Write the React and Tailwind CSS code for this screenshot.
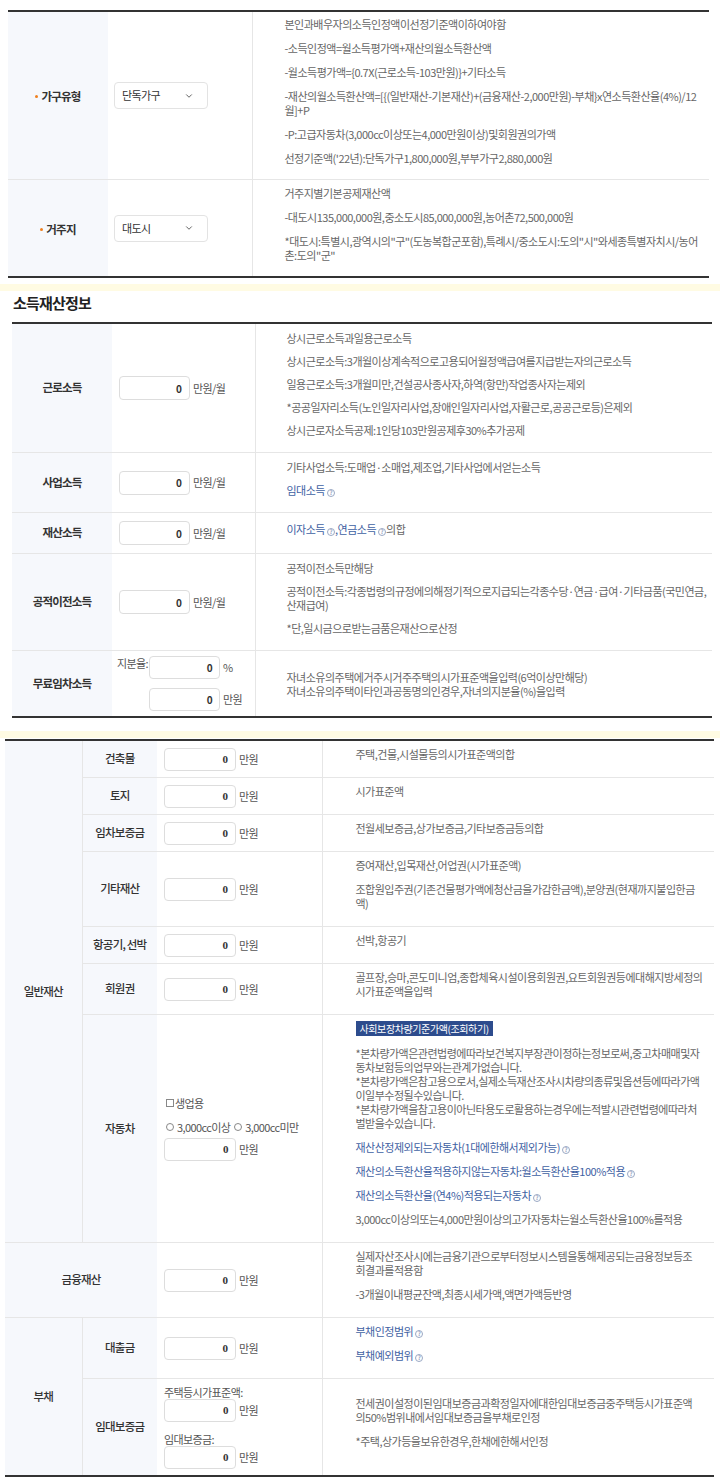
import React from "react";
import { ChevronDown } from "lucide-react";

const DESC = "text-[11px] tracking-[-0.5px] text-[#666] whitespace-nowrap";
const LINK = "text-[#3f62a3]";

function Q() {
  return (
    <span className="ml-[2px] inline-flex h-[8px] w-[8px] items-center justify-center rounded-full border border-[#9aa8c4] align-[0px] text-[6px] font-bold leading-none tracking-normal text-[#9aa8c4]">
      ?
    </span>
  );
}

function Select({ label }) {
  return (
    <div className="flex h-[27px] w-[94px] items-center justify-between rounded-[4px] border border-[#e3e3e3] bg-white pl-[7px] pr-[13px] text-[11px] tracking-[-0.6px] text-[#333]">
      <span>{label}</span>
      <ChevronDown size={10} strokeWidth={2.2} className="text-[#555]" />
    </div>
  );
}

function Num2({ small }) {
  return (
    <span
      className={
        small
          ? "inline-flex h-[23px] w-[71px] items-center justify-end rounded-[4px] border border-[#dddddd] bg-white pr-[7px] text-[10px] font-bold text-[#333]"
          : "inline-flex h-[24px] w-[71px] items-center justify-end rounded-[4px] border border-[#dddddd] bg-white pr-[7px] text-[10px] font-bold text-[#333]"
      }
    >
      0
    </span>
  );
}

function Num3() {
  return (
    <span className="inline-flex h-[23px] w-[72px] items-center justify-end rounded-[4px] border border-[#dddddd] bg-white pr-[7px] font-['Liberation_Serif',serif] text-[11px] font-bold text-[#333]">
      0
    </span>
  );
}

function Unit({ children }) {
  return <span className="ml-[3px] text-[11px] tracking-[-0.6px] text-[#555]">{children}</span>;
}

function In2({ unit, small }) {
  return (
    <div className="flex items-center">
      <Num2 small={small} />
      <Unit>{unit}</Unit>
    </div>
  );
}

function In3() {
  return (
    <div className="flex items-center">
      <Num3 />
      <Unit>만원</Unit>
    </div>
  );
}

const TH1 = "bg-[#f6f8fc] text-[11.5px] font-bold tracking-[-0.8px] text-[#333] border-b border-[#e6e6e6]";
const TH2 = "bg-[#f6f8fc] text-[11.5px] font-bold tracking-[-0.8px] text-[#333] border-b border-[#e6e6e6]";
const TH3 = "bg-[#f6f8fc] text-[11.5px] font-medium tracking-[-0.8px] text-[#333] border-b border-[#e6e6e6]";
const IN2 = "border-b border-r border-[#e6e6e6] pl-[7px] py-[8px]";
const IN3 = "border-b border-r border-[#e6e6e6] pl-[7px] py-[6px]";
const D1 = "border-b border-[#e6e6e6] pl-[32px] pr-[2px] pt-[5px] pb-[4px] align-top";
const D2 = "border-b border-[#e6e6e6] pl-[31px] pr-[2px] pt-[7px] pb-[6px]";
const D3 = "border-b border-[#e6e6e6] pl-[33px] pr-[2px] py-[6px]";
const P1 = "mb-[10px] leading-[14px]";
const P2 = "mb-[9px] leading-[14px]";
const P3 = "mb-[10px] leading-[14px]";

function Section1() {
  return (
    <table className="ml-[8px] w-[701px] table-fixed border-collapse border-y-2 border-[#333]">
      <colgroup>
        <col className="w-[100px]" />
        <col className="w-[144px]" />
        <col />
      </colgroup>
      <tbody>
        <tr>
          <th className={TH1}>
            <span className="inline-flex items-center gap-[3px]">
              <span className="h-[3px] w-[3px] rounded-full bg-[#f0801e]" />
              가구유형
            </span>
          </th>
          <td className="border-b border-r border-[#e6e6e6] pl-[6px]">
            <Select label="단독가구" />
          </td>
          <td className={D1}>
            <div className={DESC}>
              <p className={P1}>본인과배우자의소득인정액이선정기준액이하여야함</p>
              <p className={P1}>-소득인정액=월소득평가액+재산의월소득환산액</p>
              <p className={P1}>-월소득평가액={"{"}0.7X(근로소득-103만원){"}"}+기타소득</p>
              <p className={P1}>
                -재산의월소득환산액=[{"{"}(일반재산-기본재산)+(금융재산-2,000만원)-부채{"}"}x연소득환산율(4%)/12
                <br />
                월]+P
              </p>
              <p className={P1}>-P:고급자동차(3,000cc이상또는4,000만원이상)및회원권의가액</p>
              <p className={P1}>선정기준액('22년):단독가구1,800,000원,부부가구2,880,000원</p>
            </div>
          </td>
        </tr>
        <tr>
          <th className={TH1}>
            <span className="inline-flex items-center gap-[3px]">
              <span className="h-[3px] w-[3px] rounded-full bg-[#f0801e]" />
              거주지
            </span>
          </th>
          <td className="border-b border-r border-[#e6e6e6] pl-[6px]">
            <Select label="대도시" />
          </td>
          <td className={D1 + " pt-[6px]"}>
            <div className={DESC}>
              <p className={P1}>거주지별기본공제재산액</p>
              <p className={P1}>-대도시135,000,000원,중소도시85,000,000원,농어촌72,500,000원</p>
              <p className={P1}>
                *대도시:특별시,광역시의"구"(도농복합군포함),특례시/중소도시:도의"시"와세종특별자치시/농어
                <br />
                촌:도의"군"
              </p>
            </div>
          </td>
        </tr>
      </tbody>
    </table>
  );
}

function Section2() {
  return (
    <table className="ml-[12px] w-[700px] table-fixed border-collapse border-y-2 border-[#333]">
      <colgroup>
        <col className="w-[100px]" />
        <col className="w-[143px]" />
        <col />
      </colgroup>
      <tbody>
        <tr>
          <th className={TH2}>근로소득</th>
          <td className={IN2}>
            <In2 unit="만원/월" />
          </td>
          <td className={D2}>
            <div className={DESC}>
              <p className={P2}>상시근로소득과일용근로소득</p>
              <p className={P2}>상시근로소득:3개월이상계속적으로고용되어월정액급여를지급받는자의근로소득</p>
              <p className={P2}>일용근로소득:3개월미만,건설공사종사자,하역(항만)작업종사자는제외</p>
              <p className={P2}>*공공일자리소득(노인일자리사업,장애인일자리사업,자활근로,공공근로등)은제외</p>
              <p className={P2}>상시근로자소득공제:1인당103만원공제후30%추가공제</p>
            </div>
          </td>
        </tr>
        <tr>
          <th className={TH2}>사업소득</th>
          <td className={IN2}>
            <In2 unit="만원/월" />
          </td>
          <td className={D2}>
            <div className={DESC}>
              <p className={P2}>기타사업소득:도매업·소매업,제조업,기타사업에서얻는소득</p>
              <p className={P2}>
                <span className={LINK}>임대소득</span>
                <Q />
              </p>
            </div>
          </td>
        </tr>
        <tr>
          <th className={TH2}>재산소득</th>
          <td className={IN2}>
            <In2 unit="만원/월" />
          </td>
          <td className={D2}>
            <div className={DESC}>
              <p className={P2}>
                <span className={LINK}>이자소득</span>
                <Q />
                <span className={LINK}>,연금소득</span>
                <Q />
                의합
              </p>
            </div>
          </td>
        </tr>
        <tr>
          <th className={TH2}>공적이전소득</th>
          <td className={IN2}>
            <In2 unit="만원/월" />
          </td>
          <td className={D2}>
            <div className={DESC}>
              <p className={P2}>공적이전소득만해당</p>
              <p className={P2}>
                공적이전소득:각종법령의규정에의해정기적으로지급되는각종수당·연금·급여·기타금품(국민연금,
                <br />
                산재급여)
              </p>
              <p className={P2}>*단,일시금으로받는금품은재산으로산정</p>
            </div>
          </td>
        </tr>
        <tr>
          <th className={TH2}>무료임차소득</th>
          <td className="border-b border-r border-[#e6e6e6] pl-[5px] py-[5px]">
            <div className="flex flex-col gap-[9px] text-[11px] tracking-[-0.6px] text-[#555]">
              <div className="flex items-start">
                <span className="w-[32px] shrink-0 leading-[14px]">지분율:</span>
                <div className="flex items-center">
                  <Num2 small />
                  <Unit>%</Unit>
                </div>
              </div>
              <div className="flex items-start">
                <span className="w-[32px] shrink-0" />
                <In2 unit="만원" small />
              </div>
            </div>
          </td>
          <td className={D2}>
            <div className={DESC}>
              <p className="leading-[14px]">
                자녀소유의주택에거주시거주주택의시가표준액을입력(6억이상만해당)
                <br />
                자녀소유의주택이타인과공동명의인경우,자녀의지분율(%)을입력
              </p>
            </div>
          </td>
        </tr>
      </tbody>
    </table>
  );
}

function Row3({ label, children }) {
  return (
    <tr>
      <th className={TH3}>{label}</th>
      <td className={IN3}>
        <In3 />
      </td>
      <td className={D3}>
        <div className={DESC}>{children}</div>
      </td>
    </tr>
  );
}

function Radio() {
  return <span className="mr-[3px] inline-block h-[8px] w-[8px] rounded-full border border-[#888]" />;
}

function Section3() {
  return (
    <table className="ml-[5px] w-[709px] table-fixed border-collapse border-y-2 border-[#333]">
      <colgroup>
        <col className="w-[77px]" />
        <col className="w-[75px]" />
        <col className="w-[165px]" />
        <col />
      </colgroup>
      <tbody>
        <tr>
          <th rowSpan={7} className="border-b border-r border-[#e6e6e6] bg-[#f6f8fc] text-[11.5px] font-medium tracking-[-0.8px] text-[#333]">
            일반재산
          </th>
          <th className={TH3}>건축물</th>
          <td className={IN3}>
            <In3 />
          </td>
          <td className={D3}>
            <div className={DESC}>
              <p className={P3}>주택,건물,시설물등의시가표준액의합</p>
            </div>
          </td>
        </tr>
        <Row3 label="토지">
          <p className={P3}>시가표준액</p>
        </Row3>
        <Row3 label="임차보증금">
          <p className={P3}>전월세보증금,상가보증금,기타보증금등의합</p>
        </Row3>
        <Row3 label="기타재산">
          <p className={P3}>증여재산,입목재산,어업권(시가표준액)</p>
          <p className={P3}>
            조합원입주권(기존건물평가액에청산금을가감한금액),분양권(현재까지불입한금
            <br />
            액)
          </p>
        </Row3>
        <Row3 label="항공기, 선박">
          <p className={P3}>선박,항공기</p>
        </Row3>
        <Row3 label="회원권">
          <p className={P3}>
            골프장,승마,콘도미니엄,종합체육시설이용회원권,요트회원권등에대해지방세정의
            <br />
            시가표준액을입력
          </p>
        </Row3>
        <tr>
          <th className={TH3}>자동차</th>
          <td className={IN3}>
            <div className="flex flex-col items-start text-[11px] tracking-[-0.6px] text-[#555]">
              <div className="mb-[10px] flex items-center pl-[2px] leading-[14px]">
                <span className="mr-[1px] inline-block h-[8px] w-[8px] border border-[#888]" />
                생업용
              </div>
              <div className="flex items-center pl-[2px] leading-[14px]">
                <Radio />
                <span className="mr-[4px]">3,000cc이상</span>
                <Radio />
                <span>3,000cc미만</span>
              </div>
              <div className="mt-[4px]">
                <In3 />
              </div>
            </div>
          </td>
          <td className={D3}>
            <div className={DESC}>
              <p className="mb-[10px] leading-[15px]">
                <span className="inline-block bg-[#2d4c8d] px-[4px] text-[10px] leading-[15px] tracking-[-0.4px] text-white">
                  사회보장차량기준가액(조회하기)
                </span>
              </p>
              <p className={P3}>
                *본차량가액은관련법령에따라보건복지부장관이정하는정보로써,중고차매매및자
                <br />
                동차보험등의업무와는관계가없습니다.
                <br />
                *본차량가액은참고용으로서,실제소득재산조사시차량의종류및옵션등에따라가액
                <br />
                이일부수정될수있습니다.
                <br />
                *본차량가액을참고용이아닌타용도로활용하는경우에는적발시관련법령에따라처
                <br />
                벌받을수있습니다.
              </p>
              <p className={P3}>
                <span className={LINK}>재산산정제외되는자동차(1대에한해서제외가능)</span>
                <Q />
              </p>
              <p className={P3}>
                <span className={LINK}>재산의소득환산율적용하지않는자동차:월소득환산율100%적용</span>
                <Q />
              </p>
              <p className={P3}>
                <span className={LINK}>재산의소득환산율(연4%)적용되는자동차</span>
                <Q />
              </p>
              <p className={P3}>3,000cc이상의또는4,000만원이상의고가자동차는월소득환산율100%를적용</p>
            </div>
          </td>
        </tr>
        <tr>
          <th colSpan={2} className={TH3}>
            금융재산
          </th>
          <td className={IN3}>
            <In3 />
          </td>
          <td className={D3}>
            <div className={DESC}>
              <p className={P3}>
                실제자산조사시에는금융기관으로부터정보시스템을통해제공되는금융정보등조
                <br />
                회결과를적용함
              </p>
              <p className={P3}>-3개월이내평균잔액,최종시세가액,액면가액등반영</p>
            </div>
          </td>
        </tr>
        <tr>
          <th rowSpan={2} className="border-b border-r border-[#e6e6e6] bg-[#f6f8fc] text-[11.5px] font-medium tracking-[-0.8px] text-[#333]">
            부채
          </th>
          <th className={TH3}>대출금</th>
          <td className={IN3}>
            <In3 />
          </td>
          <td className={D3}>
            <div className={DESC}>
              <p className={P3}>
                <span className={LINK}>부채인정범위</span>
                <Q />
              </p>
              <p className={P3}>
                <span className={LINK}>부채예외범위</span>
                <Q />
              </p>
            </div>
          </td>
        </tr>
        <tr>
          <th className={TH3}>임대보증금</th>
          <td className={IN3}>
            <div className="flex flex-col items-start text-[11px] tracking-[-0.6px] text-[#555]">
              <span className="leading-[14px]">주택등시가표준액:</span>
              <In3 />
              <span className="mt-[10px] leading-[14px]">임대보증금:</span>
              <In3 />
            </div>
          </td>
          <td className={D3}>
            <div className={DESC}>
              <p className={P3}>
                전세권이설정이된임대보증금과확정일자에대한임대보증금중주택등시가표준액
                <br />
                의50%범위내에서임대보증금을부채로인정
              </p>
              <p className={P3}>*주택,상가등을보유한경우,한채에한해서인정</p>
            </div>
          </td>
        </tr>
      </tbody>
    </table>
  );
}

export default function App() {
  return (
    <div className="min-h-[1481px] w-[720px] bg-white font-['Noto_Sans_CJK_KR','Noto_Sans',sans-serif] text-[#333]">
      <div className="h-[10px]" />
      <Section1 />
      <div className="h-[6px]" />
      <div className="h-[7px] bg-[#fffbe3]" />
      <div className="h-[31px] pl-[13px] pt-[2px]">
        <h2 className="text-[15px] font-bold leading-[20px] tracking-[-0.8px] text-[#222]">소득재산정보</h2>
      </div>
      <Section2 />
      <div className="h-[13px]" />
      <div className="h-[7px] bg-[#fffbe3]" />
      <div className="h-[1px]" />
      <Section3 />
    </div>
  );
}
